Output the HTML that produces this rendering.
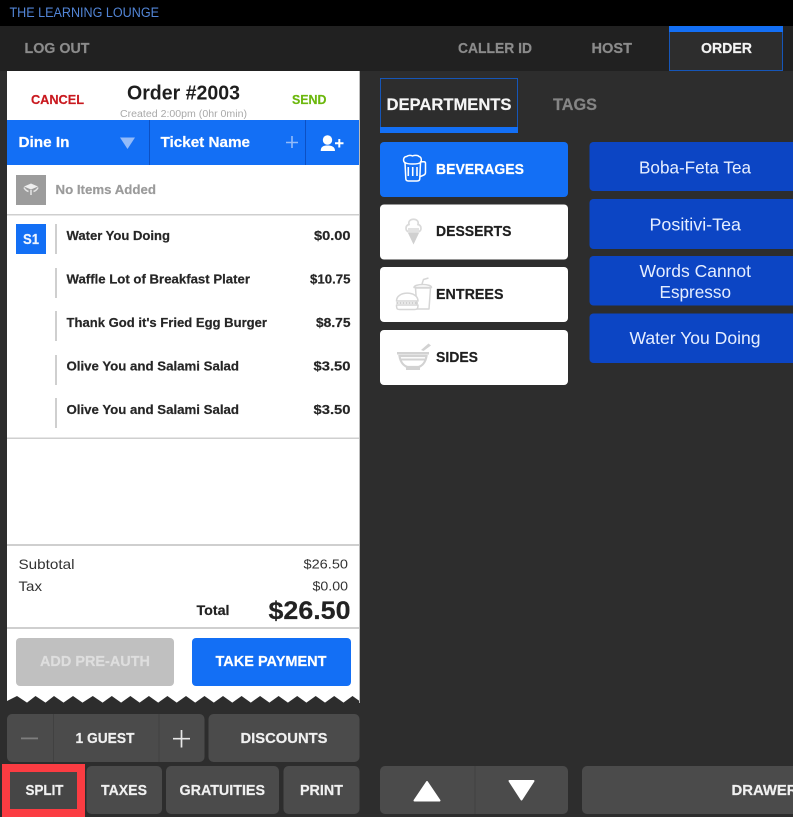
<!DOCTYPE html>
<html><head><meta charset="utf-8"><style>
html,body{margin:0;padding:0;background:#2d2d2d;overflow:hidden}
svg{display:block;font-family:"Liberation Sans",sans-serif;filter:blur(.3px)}
.b{font-weight:700;stroke-width:.2px}
</style></head><body>
<svg width="793" height="817" viewBox="0 0 793 817" xmlns="http://www.w3.org/2000/svg">
<rect width="793" height="817" fill="#2d2d2d"/>
<rect width="793" height="26" fill="#000"/>
<rect y="26" width="793" height="45" fill="#212121"/>
<text x="9.5" y="17" font-size="13.5" fill="#5285d6" textLength="149.5" lengthAdjust="spacingAndGlyphs">THE LEARNING LOUNGE</text>
<g class="b" font-size="14.5" fill="#8b8b8b" stroke="#8b8b8b">
<text x="24.5" y="53" textLength="65" lengthAdjust="spacingAndGlyphs">LOG OUT</text>
<text x="458" y="53" textLength="74" lengthAdjust="spacingAndGlyphs">CALLER ID</text>
<text x="591.5" y="53" textLength="40.5" lengthAdjust="spacingAndGlyphs">HOST</text>
</g>
<rect x="669.5" y="26.5" width="113" height="44" fill="#2d2d2d" stroke="#1656b8"/>
<rect x="669" y="26" width="114" height="6" fill="#136ff5"/>
<text class="b" x="701" y="53" font-size="14.5" fill="#f4f4f4" stroke="#f4f4f4" textLength="51" lengthAdjust="spacingAndGlyphs">ORDER</text>

<!-- ticket -->
<path d="M7 71H359.5V701L352.5 696 343.5 702.600 334.200 696 325 702.600 315.700 696 306.400 702.600 297.200 696 287.900 702.600 278.600 696 269.400 702.600 260.100 696 250.800 702.600 241.600 696 232.300 702.600 223 696 213.800 702.600 204.500 696 195.200 702.600 186 696 176.700 702.600 167.400 696 158.200 702.600 148.900 696 139.600 702.600 130.400 696 121.100 702.600 111.800 696 102.600 702.600 92.800 696 82.500 702.600 73 696 63.500 702.600 54 696 45.500 702.600 35.500 696 27 702.600 17 696 7 701Z" fill="#fff"/>
<rect x="359" y="71" width="1" height="632" fill="#bbb"/>
<text class="b" x="31" y="104" font-size="13" fill="#c9191f" stroke="#c9191f" textLength="53" lengthAdjust="spacingAndGlyphs">CANCEL</text>
<text class="b" x="127" y="99.5" font-size="20" fill="#1e1e1e" textLength="113" lengthAdjust="spacingAndGlyphs">Order #2003</text>
<text x="120" y="117" font-size="10" fill="#a9a9a9" textLength="127" lengthAdjust="spacingAndGlyphs">Created 2:00pm (0hr 0min)</text>
<text class="b" x="292" y="104" font-size="13" fill="#6bb70c" stroke="#6bb70c" textLength="34.5" lengthAdjust="spacingAndGlyphs">SEND</text>
<rect x="7" y="120" width="352" height="45" fill="#136ff5"/>
<rect x="149" y="120" width="1" height="45" fill="#0c50c4"/>
<rect x="305" y="120" width="1" height="45" fill="#0c50c4"/>
<text class="b" x="18.5" y="147" font-size="15" fill="#fff" stroke="#fff" textLength="51" lengthAdjust="spacingAndGlyphs">Dine In</text>
<path d="M120 137.500H135L127.500 149Z" fill="#93bbf9"/>
<text class="b" x="160.500" y="147" font-size="15" fill="#fff" stroke="#fff" textLength="89.500" lengthAdjust="spacingAndGlyphs">Ticket Name</text>
<path d="M292 136V148M286 142.500H298" stroke="#93bbf9" stroke-width="1.600" fill="none"/>
<circle cx="327.500" cy="140" r="4.700" fill="#fff"/>
<path d="M320.700 151C320.700 146.500 323.500 145.500 327.500 145.500S335 146.500 335 151Z" fill="#fff"/>
<path d="M339.300 139V147.500M335 143.300H343.500" stroke="#fff" stroke-width="2"/>

<rect x="16" y="175" width="30" height="30" fill="#9c9c9c"/>
<path d="M24 186.500L31 183.500 38 186.500 31 189.500Z" fill="#eee"/>
<path d="M24 187.500C25 190 27 191 28.500 191.500M38 187.500C37 190 35 191 33.500 191.500M31 190V195" stroke="#e6e6e6" stroke-width="1.500" fill="none"/>
<text class="b" x="55.500" y="194" font-size="13" fill="#9b9b9b" stroke="#9b9b9b" textLength="100.500" lengthAdjust="spacingAndGlyphs">No Items Added</text>
<rect x="7" y="214" width="352" height="1.500" fill="#cfcfcf"/>

<rect x="16" y="224" width="30" height="30" fill="#136ff5"/>
<text class="b" x="23" y="244" font-size="14.500" fill="#eef4ff" stroke="#eef4ff" textLength="16" lengthAdjust="spacingAndGlyphs">S1</text>
<g fill="#cfcfcf">
<rect x="55" y="224" width="2" height="30"/><rect x="55" y="268" width="2" height="30"/><rect x="55" y="311" width="2" height="30"/><rect x="55" y="355" width="2" height="30"/><rect x="55" y="398" width="2" height="30"/>
</g>
<g class="b" font-size="12.500" fill="#262626" stroke="#262626">
<text x="66.500" y="240" textLength="103.500" lengthAdjust="spacingAndGlyphs">Water You Doing</text>
<text x="314" y="240" font-size="13" textLength="36.500" lengthAdjust="spacingAndGlyphs">$0.00</text>
<text x="66.500" y="283.500" textLength="183.500" lengthAdjust="spacingAndGlyphs">Waffle Lot of Breakfast Plater</text>
<text x="310" y="283.500" font-size="13" textLength="40.500" lengthAdjust="spacingAndGlyphs">$10.75</text>
<text x="66.500" y="327" textLength="200.500" lengthAdjust="spacingAndGlyphs">Thank God it's Fried Egg Burger</text>
<text x="316" y="327" font-size="13" textLength="34.500" lengthAdjust="spacingAndGlyphs">$8.75</text>
<text x="66.500" y="370.500" textLength="172.500" lengthAdjust="spacingAndGlyphs">Olive You and Salami Salad</text>
<text x="313.500" y="370.500" font-size="13" textLength="37" lengthAdjust="spacingAndGlyphs">$3.50</text>
<text x="66.500" y="414" textLength="172.500" lengthAdjust="spacingAndGlyphs">Olive You and Salami Salad</text>
<text x="313.500" y="414" font-size="13" textLength="37" lengthAdjust="spacingAndGlyphs">$3.50</text>
</g>
<rect x="7" y="437.500" width="352" height="1.500" fill="#cfcfcf"/>
<rect x="7" y="544" width="352" height="2" fill="#cfcfcf"/>
<g font-size="14" fill="#333">
<text x="18.500" y="569" textLength="56" lengthAdjust="spacingAndGlyphs">Subtotal</text>
<text x="18.500" y="591" textLength="23.500" lengthAdjust="spacingAndGlyphs">Tax</text>
<text x="303.500" y="568.500" font-size="13" textLength="44.500" lengthAdjust="spacingAndGlyphs">$26.50</text>
<text x="312.500" y="590.500" font-size="13" textLength="35.500" lengthAdjust="spacingAndGlyphs">$0.00</text>
</g>
<text class="b" x="196.500" y="615" font-size="14" fill="#222" stroke="#222" textLength="33" lengthAdjust="spacingAndGlyphs">Total</text>
<text class="b" x="268.500" y="619" font-size="25" fill="#222" stroke="#222" textLength="82" lengthAdjust="spacingAndGlyphs">$26.50</text>
<rect x="7" y="627" width="352" height="2" fill="#cfcfcf"/>
<rect x="16" y="638" width="158" height="48" rx="4" fill="#c0c0c0"/>
<text class="b" x="40" y="666" font-size="14.500" fill="#dedede" stroke="#dedede" textLength="110" lengthAdjust="spacingAndGlyphs">ADD PRE-AUTH</text>
<rect x="192" y="638" width="159" height="48" rx="4" fill="#136ff5"/>
<text class="b" x="215.500" y="666" font-size="14.500" fill="#fff" stroke="#fff" textLength="111" lengthAdjust="spacingAndGlyphs">TAKE PAYMENT</text>

<!-- bottom left -->
<g fill="#4b4b4b">
<rect x="7" y="714" width="197.500" height="48" rx="5"/>
<rect x="208.500" y="714" width="151" height="48" rx="5"/>
<rect x="86.500" y="766" width="75.500" height="48" rx="5"/>
<rect x="166" y="766" width="113" height="48" rx="5"/>
<rect x="283.500" y="766" width="76" height="48" rx="5"/>
</g>
<rect x="53" y="714" width="1" height="48" fill="#414141"/>
<rect x="158.500" y="714" width="1" height="48" fill="#414141"/>
<rect x="21" y="737.500" width="17" height="1.800" fill="#7e7e7e"/>
<path d="M181.500 730V747.500M173 738.700H190" stroke="#e8e8e8" stroke-width="1.700"/>
<rect x="6" y="768" width="75" height="45" fill="#464646" stroke="#fb3c42" stroke-width="8"/>
<g class="b" font-size="14.500" fill="#f0f0f0" stroke="#f0f0f0">
<text x="75.500" y="743" textLength="59" lengthAdjust="spacingAndGlyphs">1 GUEST</text>
<text x="240.500" y="743" textLength="87" lengthAdjust="spacingAndGlyphs">DISCOUNTS</text>
<text x="25.500" y="795" textLength="38" lengthAdjust="spacingAndGlyphs">SPLIT</text>
<text x="101" y="795" textLength="46" lengthAdjust="spacingAndGlyphs">TAXES</text>
<text x="179.500" y="795" textLength="85.500" lengthAdjust="spacingAndGlyphs">GRATUITIES</text>
<text x="300" y="795" textLength="43" lengthAdjust="spacingAndGlyphs">PRINT</text>
</g>

<!-- right -->
<rect x="380.500" y="78.500" width="137" height="54" fill="#2d2d2d" stroke="#1656b8"/>
<rect x="380" y="127" width="138" height="6" fill="#136ff5"/>
<text class="b" x="386.500" y="110" font-size="16.500" fill="#f5f5f5" stroke="#f5f5f5" textLength="125" lengthAdjust="spacingAndGlyphs">DEPARTMENTS</text>
<text class="b" x="553" y="110" font-size="16.500" fill="#858585" stroke="#858585" textLength="44" lengthAdjust="spacingAndGlyphs">TAGS</text>

<rect x="380" y="142" width="188" height="55" rx="4" fill="#136ff5"/>
<rect x="380" y="204.500" width="188" height="55" rx="4" fill="#fff"/>
<rect x="380" y="267" width="188" height="55" rx="4" fill="#fff"/>
<rect x="380" y="330" width="188" height="55" rx="4" fill="#fff"/>
<text class="b" x="436" y="174" font-size="14.500" fill="#fff" stroke="#fff" textLength="88" lengthAdjust="spacingAndGlyphs">BEVERAGES</text>
<g class="b" font-size="14.500" fill="#1f1f1f" stroke="#1f1f1f">
<text x="436" y="236" textLength="75.500" lengthAdjust="spacingAndGlyphs">DESSERTS</text>
<text x="436" y="299" textLength="67.500" lengthAdjust="spacingAndGlyphs">ENTREES</text>
<text x="436" y="362" textLength="42" lengthAdjust="spacingAndGlyphs">SIDES</text>
</g>
<!-- beer mug -->
<g fill="none" stroke="#fff" stroke-width="1.500" stroke-linejoin="round" stroke-linecap="round">
<path d="M405 163C402.500 160.500 403.500 156.800 406.500 156.500C408.500 155 411 155.300 412.500 156C414.500 155 418 155.200 419 156.500C421.500 157 422 160.500 420.500 163"/>
<path d="M405 162.500C407 164.500 418.500 164.500 420.500 162.500L419.800 178.500C419.800 180.300 418.800 181 417 181H408.500C406.800 181 405.800 180.300 405.800 178.500Z"/>
<path d="M420.500 161.700H424C425 161.700 425.500 162.300 425.500 163.200V172.500C425.500 174 425 174.500 424 175L420 176.700"/>
<path d="M408.300 167V176M412.700 167V176M417 167V176" stroke-width="1.600" stroke-linecap="butt"/>
</g>
<!-- ice cream -->
<path d="M409 232C405 231 405 225.500 409 224.500C407 217.500 420 217.500 418 224.500C422 225.500 422 231 418 232Z" fill="#fff" stroke="#dadada" stroke-width="1.700"/>
<path d="M408 233H419L413.500 244.500Z" fill="#d0d0d0"/>
<path d="M408 228H419V232H408Z" fill="#e2e2e2"/>
<!-- burger + drink -->
<g fill="#fff" stroke="#d6d6d6" stroke-width="1.500" stroke-linejoin="round">
<path d="M415.500 288H430.500L429 309H417Z"/>
<path d="M414 287.500C414 283.500 431.500 283.500 431.500 287.500Z"/>
<path d="M422 284L423.500 279.500 428.500 278" fill="none"/>
<path d="M396.500 301C396.500 290.500 418 290.500 418 301Z"/>
<path d="M396.500 305H418C418 310 416 309.500 414 309.500H400.500C398 309.500 396.500 310 396.500 305Z"/>
</g>
<path d="M396.500 303H418" stroke="#cfcfcf" stroke-width="2" stroke-dasharray="2 1"/>
<!-- bowl -->
<g fill="#d2d2d2">
<rect x="397" y="352" width="32" height="2.500"/>
<path d="M399.500 356H426.500C425.500 363 421.500 366 418.500 367H407.500C404.500 366 400.500 363 399.500 356Z" fill="#fff" stroke="#d2d2d2" stroke-width="2.200"/>
<rect x="400" y="358.500" width="26" height="2"/>
<rect x="406" y="367" width="14" height="3"/>
<path d="M421 350L428.500 343.500 431 345.500 423.500 351Z"/>
</g>

<g fill="#0c45c4">
<rect x="589.500" y="142" width="220" height="49" rx="4"/>
<rect x="589.500" y="199" width="220" height="50" rx="4"/>
<rect x="589.500" y="256" width="220" height="49.500" rx="4"/>
<rect x="589.500" y="313.500" width="220" height="49.500" rx="4"/>
</g>
<g font-size="17.500" fill="#e6eeff">
<text x="639" y="173.500" textLength="112" lengthAdjust="spacingAndGlyphs">Boba-Feta Tea</text>
<text x="649.500" y="230.500" textLength="91.500" lengthAdjust="spacingAndGlyphs">Positivi-Tea</text>
<text x="639.500" y="277" textLength="111.500" lengthAdjust="spacingAndGlyphs">Words Cannot</text>
<text x="659.500" y="298" textLength="71.500" lengthAdjust="spacingAndGlyphs">Espresso</text>
<text x="629.500" y="344" textLength="131" lengthAdjust="spacingAndGlyphs">Water You Doing</text>
</g>

<rect x="380" y="766" width="188" height="48" rx="5" fill="#4b4b4b"/>
<rect x="474.500" y="766" width="1" height="48" fill="#414141"/>
<path d="M427 782L439.500 800.500H414.500Z" fill="#fff" stroke="#fff" stroke-width="2" stroke-linejoin="round"/>
<path d="M509.500 781H533.500L521.500 799.500Z" fill="#fff" stroke="#fff" stroke-width="2" stroke-linejoin="round"/>
<rect x="582" y="766" width="240" height="48" rx="5" fill="#4b4b4b"/>
<text class="b" x="731.500" y="795" font-size="14.500" fill="#f0f0f0" stroke="#f0f0f0" textLength="66" lengthAdjust="spacingAndGlyphs">DRAWER</text>
</svg>
</body></html>
